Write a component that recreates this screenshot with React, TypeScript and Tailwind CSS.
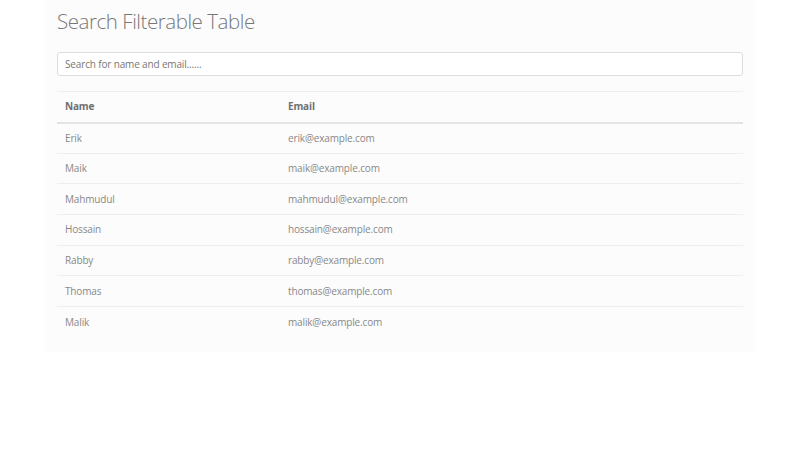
import React, { useState } from 'react';

const people = [
  { name: 'Erik', email: 'erik@example.com' },
  { name: 'Maik', email: 'maik@example.com' },
  { name: 'Mahmudul', email: 'mahmudul@example.com' },
  { name: 'Hossain', email: 'hossain@example.com' },
  { name: 'Rabby', email: 'rabby@example.com' },
  { name: 'Thomas', email: 'thomas@example.com' },
  { name: 'Malik', email: 'malik@example.com' },
];

const App: React.FC = () => {
  const [query, setQuery] = useState('');

  const rows = people.filter(
    (p) =>
      p.name.toLowerCase().includes(query.toLowerCase()) ||
      p.email.toLowerCase().includes(query.toLowerCase())
  );

  return (
    <div className="min-h-[450px] bg-white font-['Open_Sans',sans-serif]">
      <div className="mx-[44px] bg-[#fcfcfc] px-[13px] pt-[8px] pb-[15px]">
        <h2 className="text-[20.5px] font-light leading-[27px] tracking-[-0.45px] text-[#777]">Search Filterable Table</h2>

        <input
          type="text"
          value={query}
          onChange={(e) => setQuery(e.target.value)}
          placeholder="Search for name and email......"
          className="mt-[17px] block h-[24px] w-full rounded-[3px] border border-[#ddd] bg-white px-[7px] text-[10px] tracking-[-0.15px] text-[#555] placeholder:text-[#777] outline-none"
        />

        <table className="mt-[15px] w-full border-collapse text-[10px] tracking-[-0.15px]">
          <thead>
            <tr className="border-t border-[#eee]">
              <th className="h-[31px] w-[223px] border-b-2 border-[#e4e4e4] px-[8px] text-left font-bold text-[#6f6f6f]">Name</th>
              <th className="h-[31px] border-b-2 border-[#e4e4e4] px-[8px] text-left font-bold text-[#6f6f6f]">Email</th>
            </tr>
          </thead>
          <tbody>
            {rows.map((p, i) => (
              <tr key={p.email} className={i < rows.length - 1 ? 'border-b border-[#eee]' : ''}>
                <td className="h-[30.7px] px-[8px] text-[#888]">{p.name}</td>
                <td className="h-[30.7px] px-[8px] text-[#888]">{p.email}</td>
              </tr>
            ))}
          </tbody>
        </table>
      </div>
    </div>
  );
};

export default App;
